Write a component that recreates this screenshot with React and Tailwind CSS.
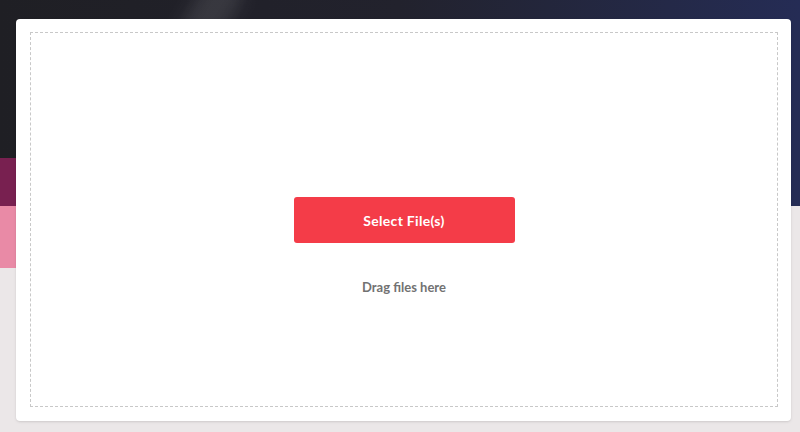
import React from 'react';

const App = () => {
  return (
    <div className="relative w-full h-[432px] overflow-hidden bg-[#ebe7e8]" style={{ fontFamily: 'Lato, "Noto Sans", sans-serif' }}>
      {/* Hero band + blob (background decoration) */}
      <div className="absolute top-0 inset-x-0 h-[206px] overflow-hidden bg-gradient-to-r from-[#1f1f24] via-[#22222d] to-[#252c55]">
        <div className="absolute left-[-70px] top-[158px] w-[180px] h-[110px] rounded-full bg-[#782050]" />
        <div className="absolute left-[190px] top-[-30px] w-[40px] h-[90px] rotate-[30deg] rounded-full bg-white/10 blur-sm" />
      </div>
      <div className="absolute left-[-70px] top-[158px] w-[180px] h-[110px] rounded-full bg-[#e98aa6] [clip-path:inset(48px_0_0_0)]" />

      {/* Uploader card */}
      <div className="relative z-10 pt-[19px] pl-4 pr-[9px]">
        <div className="h-[402px] bg-white rounded shadow-sm pl-[14px] pr-[13px] pt-[13px] pb-[14px]">
          <div className="h-full border border-dashed border-[#c8c8c8] flex flex-col items-center pt-[164px]">
            <button className="w-[221px] h-[46px] rounded-[3px] bg-[#f43c48] text-white text-[14px] font-bold tracking-[0.3px]">
              Select File(s)
            </button>
            <p className="mt-[35px] text-[13px] font-bold text-[#727272]">Drag files here</p>
          </div>
        </div>
      </div>
    </div>
  );
};

export default App;
